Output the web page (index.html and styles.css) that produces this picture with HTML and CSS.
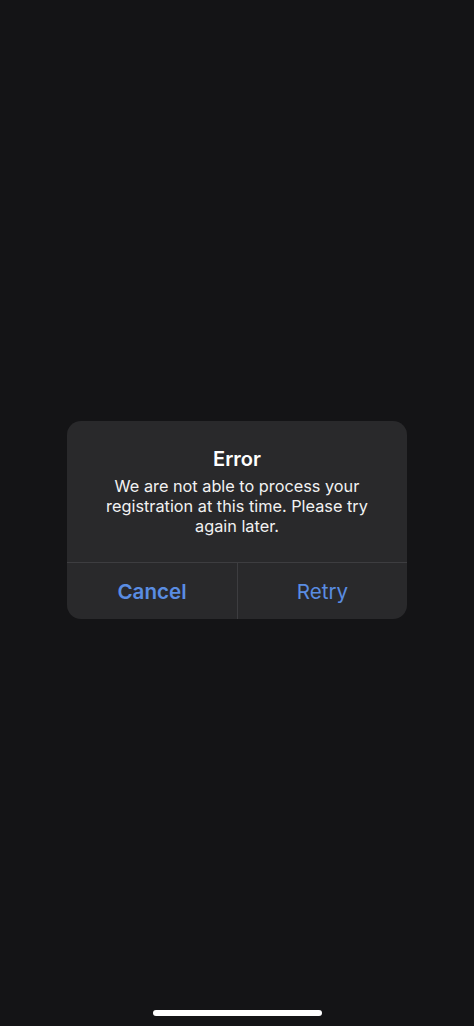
FILE: index.html
```html
<!DOCTYPE html>
<html>
<head>
<meta charset="utf-8">
<link rel="stylesheet" href="styles.css">
</head>
<body>
<div class="screen">
  <div class="alert">
    <div class="alert-body">
      <div class="alert-title">Error</div>
      <div class="alert-message">We are not able to process your registration at this time. Please try again later.</div>
    </div>
    <div class="alert-actions">
      <div class="alert-btn bold">Cancel</div>
      <div class="alert-btn">Retry</div>
    </div>
  </div>
  <div class="home-indicator"></div>
</div>
</body>
</html>
```
FILE: styles.css
```css
html, body {
  margin: 0;
  padding: 0;
  background: #141416;
}
.screen {
  width: 474px;
  height: 1026px;
  display: flex;
  flex-direction: column;
  align-items: center;
  font-family: Inter, "Liberation Sans", sans-serif;
  color: #fff;
}
.alert {
  margin-top: 421px;
  width: 340px;
  background: #29292b;
  border-radius: 14px;
  overflow: hidden;
}
.alert-body {
  padding: 26px 16px 26px;
  text-align: center;
  border-bottom: 1px solid #3d3d40;
}
.alert-title {
  font-size: 20px;
  font-weight: 600;
  line-height: 24px;
  margin-bottom: 5px;
}
.alert-message {
  font-size: 16.3px;
  line-height: 20px;
  color: #f2f2f2;
  padding: 0 16px;
}
.alert-actions {
  display: grid;
  grid-template-columns: 1fr 1fr;
  height: 56px;
}
.alert-btn {
  display: flex;
  align-items: center;
  justify-content: center;
  font-size: 20.6px;
  color: #5a8de2;
}
.alert-btn + .alert-btn {
  border-left: 1px solid #3d3d40;
}
.alert-btn.bold {
  font-weight: 600;
}
.home-indicator {
  margin-top: auto;
  margin-bottom: 10px;
  width: 169px;
  height: 6px;
  border-radius: 3px;
  background: #fff;
}
```
